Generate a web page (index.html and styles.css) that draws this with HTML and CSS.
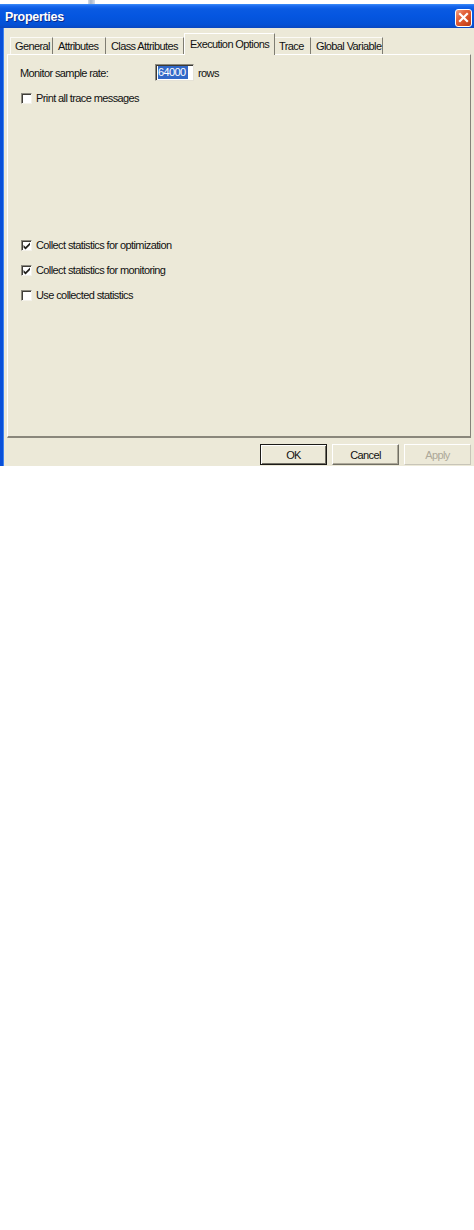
FILE: index.html
```html
<!DOCTYPE html>
<html>
<head>
<meta charset="utf-8">
<link rel="stylesheet" href="styles.css">
</head>
<body>
<div class="topstrip"><span class="topmark"></span></div>
<div class="dialog">
  <div class="titlebar">
    <span class="title">Properties</span>
    <span class="close"><svg width="11" height="11" viewBox="0 0 11 11"><path d="M2 2 L9 9 M9 2 L2 9" stroke="#fff" stroke-width="2.2" stroke-linecap="square"/></svg></span>
  </div>
  <div class="body">
    <div class="tabs">
      <div class="tab t1">General</div>
      <div class="tab t2">Attributes</div>
      <div class="tab t3">Class Attributes</div>
      <div class="tab t4 selected">Execution Options</div>
      <div class="tab t5">Trace</div>
      <div class="tab t6">Global Variable</div>
    </div>
    <div class="panel">
      <div class="row rate">
        <span class="label">Monitor sample rate:</span>
        <span class="input"><span class="sel">64000</span></span>
        <span class="unit">rows</span>
      </div>
      <div class="row check first"><span class="box"></span><span>Print all trace messages</span></div>
      <div class="row check gapbig"><span class="box checked"><svg width="8" height="8" viewBox="0 0 8 8"><path d="M0.5 3 L2.5 5 L7 0.5 L7 3 L2.5 7.5 L0.5 5.5 Z" fill="#21201c"/></svg></span><span>Collect statistics for optimization</span></div>
      <div class="row check"><span class="box checked"><svg width="8" height="8" viewBox="0 0 8 8"><path d="M0.5 3 L2.5 5 L7 0.5 L7 3 L2.5 7.5 L0.5 5.5 Z" fill="#21201c"/></svg></span><span>Collect statistics for monitoring</span></div>
      <div class="row check"><span class="box"></span><span>Use collected statistics</span></div>
    </div>
    <div class="buttons">
      <button class="btn default">OK</button>
      <button class="btn">Cancel</button>
      <button class="btn disabled">Apply</button>
    </div>
  </div>
</div>
</body>
</html>
```
FILE: styles.css
```css
html, body {
  margin: 0;
  padding: 0;
  background: #fff;
}
body {
  font-family: "Liberation Sans", Arial, sans-serif;
  font-size: 11px;
  letter-spacing: -0.6px;
  color: #111;
}
.topstrip {
  height: 4px;
  display: flex;
}
.topmark {
  margin-left: 88px;
  width: 7px;
  height: 4px;
  background: linear-gradient(90deg, #d6dde8, #a9b6c8 40%, #d6dde8);
}
.dialog {
  width: 474px;
  height: 462px;
  display: flex;
  flex-direction: column;
  overflow: hidden;
}
.titlebar {
  height: 24px;
  flex: none;
  display: flex;
  align-items: center;
  justify-content: space-between;
  background: linear-gradient(180deg, #3d8ef8 0, #1a69ee 2px, #0a5ae2 5px, #0556e0 50%, #0451d6 85%, #0a47c0 100%);
  padding-left: 5px;
  padding-right: 2px;
}
.title {
  color: #fff;
  font-family: "Liberation Sans", Arial, sans-serif;
  font-weight: bold;
  font-size: 12.5px;
  letter-spacing: -0.3px;
  text-shadow: 1px 1px 0 #0a2a8a;
  margin-top: 1px;
}
.close {
  width: 15px;
  height: 16px;
  border: 1px solid #fff;
  border-radius: 3px;
  background: linear-gradient(135deg, #f2a183 0, #e4643e 35%, #d24b22 70%, #b83a16 100%);
  display: flex;
  align-items: center;
  justify-content: center;
  margin-top: 3px;
}
.body {
  flex: 1;
  background: #ece9d8;
  border-left: 3px solid #0a50d8;
  box-shadow: inset 1px 0 0 #3f83f0;
  display: flex;
  flex-direction: column;
  padding-top: 5px;
}
.tabs {
  display: flex;
  align-items: flex-end;
  height: 21px;
  margin-left: 7px;
  position: relative;
  z-index: 1;
}
.tab {
  height: 17px;
  line-height: 17px;
  padding-left: 4px;
  box-sizing: border-box;
  border-top: 1px solid #fbfaf5;
  border-right: 1px solid #7f7d72;
  white-space: nowrap;
}
.t1 { width: 43px; border-left: 1px solid #fbfaf5; }
.t2 { width: 53px; padding-left: 5px; }
.t3 { width: 78px; padding-left: 5px; }
.t4 { width: 91px; padding-left: 5px; }
.t5 { width: 36px; padding-left: 4px; }
.t6 { width: 72px; padding-left: 5px; }
.tab.selected {
  height: 22px;
  line-height: 20px;
  margin-bottom: -1px;
  border-left: 1px solid #fff;
  border-top: 1px solid #fff;
  background: #ece9d8;
}
.panel {
  margin-left: 4px;
  width: 464px;
  height: 384px;
  box-sizing: border-box;
  border-top: 1px solid #fff;
  border-left: 1px solid #fff;
  border-right: 1px solid #85837a;
  border-bottom: 2px solid #8a877b;
  padding: 9px 0 0 12px;
  display: flex;
  flex-direction: column;
}
.row {
  display: flex;
  align-items: center;
}
.rate {
  height: 17px;
}
.label {
  width: 135px;
}
.input {
  width: 39px;
  height: 17px;
  box-sizing: border-box;
  background: #fff;
  border-top: 1px solid #8c8a80;
  border-left: 1px solid #8c8a80;
  border-right: 1px solid #e5e2d6;
  border-bottom: 1px solid #e5e2d6;
  box-shadow: inset 1px 1px 0 #3d3b35;
  display: flex;
  align-items: center;
  padding-left: 2px;
}
.sel {
  background: #3168c8;
  color: #fff;
  height: 13px;
  line-height: 13px;
  padding-right: 2px;
}
.unit {
  margin-left: 4px;
}
.check {
  height: 16px;
  margin-top: 9px;
  padding-left: 1px;
}
.check.first {
  margin-top: 9px;
}
.check.gapbig {
  margin-top: 131px;
}
.box {
  width: 11px;
  height: 11px;
  box-sizing: border-box;
  margin-right: 4px;
  background: #fff;
  border-top: 1px solid #8c8a80;
  border-left: 1px solid #8c8a80;
  border-right: 1px solid #f4f2ea;
  border-bottom: 1px solid #f4f2ea;
  box-shadow: inset 1px 1px 0 #403e38;
  display: flex;
  align-items: center;
  justify-content: center;
  padding: 1px 0 0 1px;
}
.box svg { display: block; }
.buttons {
  display: flex;
  justify-content: flex-end;
  gap: 5px;
  margin-top: 6px;
  width: 468px;
}
.btn {
  width: 67px;
  height: 21px;
  box-sizing: border-box;
  font-family: "Liberation Sans", Arial, sans-serif;
  font-size: 11px;
  letter-spacing: -0.6px;
  color: #111;
  background: #ece9d8;
  border-top: 1px solid #fff;
  border-left: 1px solid #fff;
  border-right: 1px solid #716f64;
  border-bottom: 1px solid #716f64;
  box-shadow: inset -1px -1px 0 #aca899;
  padding: 0;
}
.btn.default {
  border: 1px solid #1b1a17;
  box-shadow: inset 1px 1px 0 #fff, inset -1px -1px 0 #716f64;
}
.btn.disabled {
  color: #aca899;
  border-right-color: #c8c5b8;
  border-bottom-color: #c8c5b8;
  box-shadow: none;
}
```
